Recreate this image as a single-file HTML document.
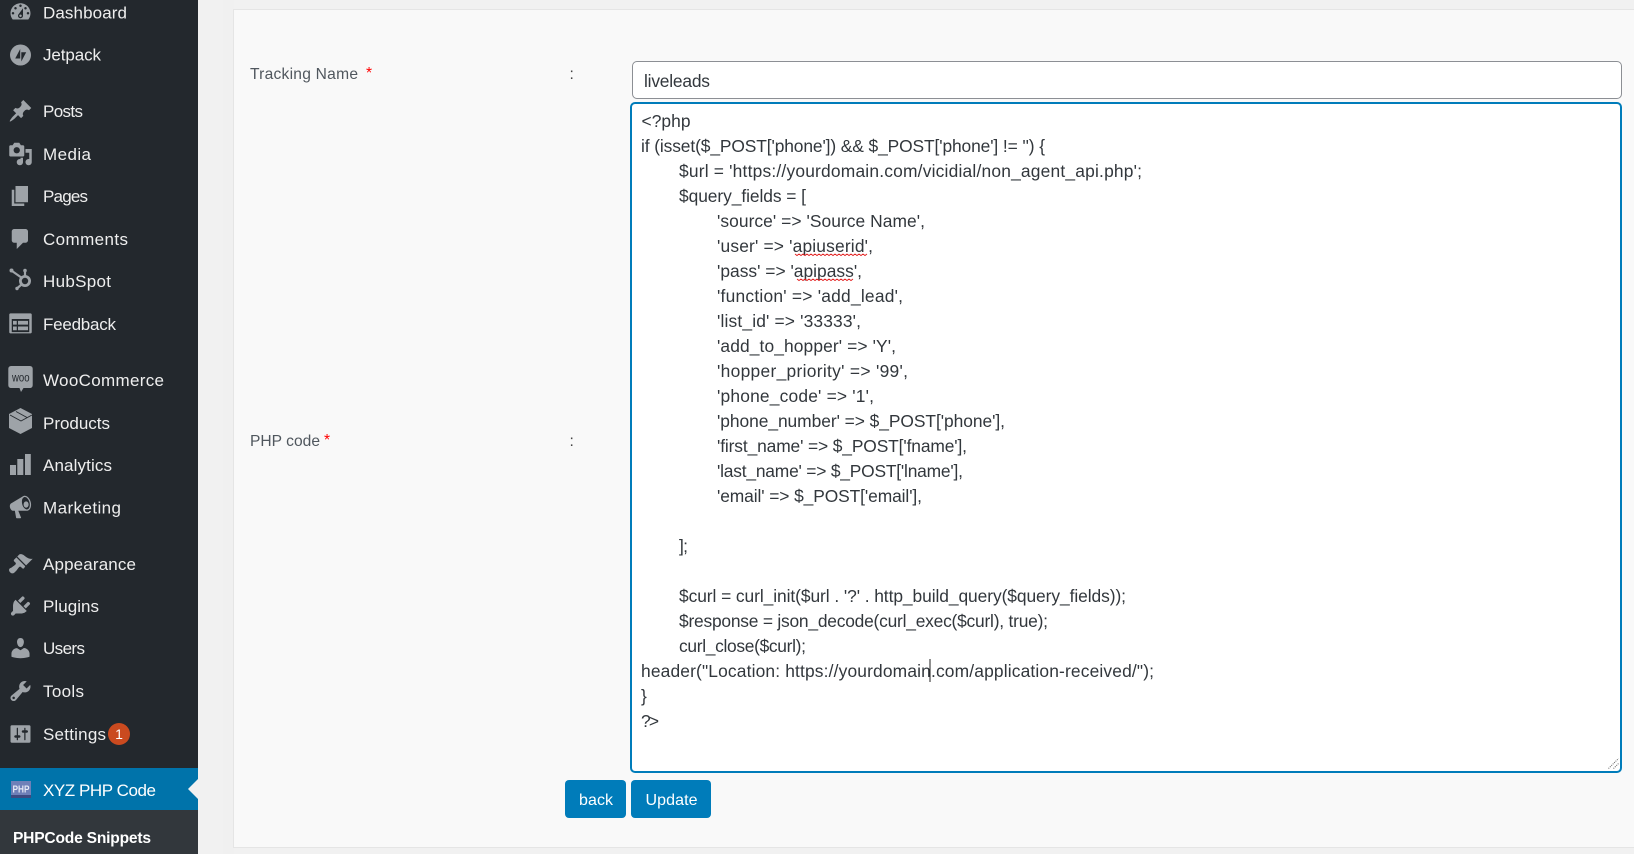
<!DOCTYPE html>
<html lang="en">
<head>
<meta charset="utf-8">
<title>XYZ PHP Code</title>
<style>
html,body{margin:0;padding:0;width:1634px;height:854px;overflow:hidden;background:#f1f1f1;font-family:"Liberation Sans",sans-serif}
.a{position:absolute;box-sizing:border-box}
#side{left:0;top:0;width:198px;height:854px;background:#23282d}
#act{left:0;top:768px;width:198px;height:42px;background:#0073aa}
#sub{left:0;top:810px;width:198px;height:44px;background:#32373c}
#strip{left:223px;top:0;width:11px;height:854px;background:#f0f0f0}
#panel{left:233px;top:9px;width:1420px;height:839px;background:#f9f9f9;border:1px solid #e5e5e5}
#inp{left:632px;top:61px;width:990px;height:38px;background:#fff;border:1px solid #8c8f94;border-radius:5px}
#ta{left:630px;top:102px;width:992px;height:671px;background:#fff;border:2px solid #007cba;border-radius:5px}
.btn{background:#007cba;border-radius:4px;top:780px;height:38px}
#b1{left:565px;width:61px}
#b2{left:631px;width:80px}
svg{position:absolute;left:0;top:0}
.m{font:17px "Liberation Sans",sans-serif;fill:#eee}
.c{font:17.4px "Liberation Sans",sans-serif;fill:#32373c}
.l{font:15.6px "Liberation Sans",sans-serif;fill:#50575e}
.i{fill:#9ea3a8}
</style>
</head>
<body>
<div class="a" id="side"></div>
<div class="a" id="act"></div>
<div class="a" id="sub"></div>
<div class="a" id="strip"></div>
<div class="a" id="panel"></div>
<div class="a" id="inp"></div>
<div class="a" id="ta"></div>
<div class="a btn" id="b1"></div>
<div class="a btn" id="b2"></div>

<svg width="1634" height="854" viewBox="0 0 1634 854">
<!-- active arrow -->
<path d="M198 779L188 789L198 799z" fill="#f1f1f1"/>

<!-- menu icons -->
<g class="i">
<path transform="translate(8,-.5) scale(1.25)" d="M3.76 16h12.48c1.1-1.37 1.76-3.11 1.76-5 0-4.42-3.58-8-8-8s-8 3.58-8 8c0 1.89.66 3.63 1.76 5zM10 4c.55 0 1 .45 1 1s-.45 1-1 1-1-.45-1-1 .45-1 1-1zM6 6c.55 0 1 .45 1 1s-.45 1-1 1-1-.45-1-1 .45-1 1-1zm8 0c.55 0 1 .45 1 1s-.45 1-1 1-1-.45-1-1 .45-1 1-1zm-5.37 5.55L12 7v6c0 1.1-.9 2-2 2s-2-.9-2-2c0-.57.24-1.08.63-1.45zM4 10c.55 0 1 .45 1 1s-.45 1-1 1-1-.45-1-1 .45-1 1-1zm12 0c.55 0 1 .45 1 1s-.45 1-1 1-1-.45-1-1 .45-1 1-1zm-5 3c0-.55-.45-1-1-1s-1 .45-1 1 .45 1 1 1 1-.45 1-1z"/>
<circle cx="20.5" cy="55" r="10.5"/>
<path transform="translate(8,98.5) scale(1.25)" d="M10.44 3.02l1.82-1.82 6.36 6.35-1.83 1.82c-1.05-.68-2.48-.57-3.41.36l-.75.75c-.92.93-1.04 2.35-.35 3.41l-1.83 1.82-2.41-2.41-2.8 2.79c-.42.42-3.38 2.71-3.8 2.29s1.86-3.39 2.28-3.81l2.79-2.79L4.1 9.36l1.83-1.82c1.05.69 2.48.57 3.4-.36l.75-.75c.93-.92 1.05-2.35.36-3.41z"/>
<path transform="translate(8,141.5) scale(1.25)" d="M13 11V4c0-.55-.45-1-1-1h-1.67L9 1H5L3.67 3H2c-.55 0-1 .45-1 1v7c0 .55.45 1 1 1h10c.55 0 1-.45 1-1zM7 4.5c1.38 0 2.5 1.12 2.5 2.5S8.38 9.5 7 9.5 4.5 8.38 4.5 7 5.62 4.5 7 4.5zM14 6h5v10.5c0 1.38-1.12 2.5-2.5 2.5S14 17.88 14 16.5s1.12-2.5 2.5-2.5c.17 0 .34.02.5.05V9h-3V6zm-4 8.05V13h2v3.5c0 1.38-1.12 2.5-2.5 2.5S7 17.88 7 16.5 8.12 14 9.5 14c.17 0 .34.02.5.05z"/>
<path transform="translate(8,183.5) scale(1.25)" d="M6 15V2h10v13H6zm-1 1h8v2H3V5h2v11z"/>
<path transform="translate(8,226.5) scale(1.25)" d="M5 2h9c1.1 0 2 .9 2 2v7c0 1.1-.9 2-2 2h-2l-5 5v-5H5c-1.1 0-2-.9-2-2V4c0-1.1.9-2 2-2z"/>
<path fill-rule="evenodd" transform="translate(8,311.5) scale(1.25)" d="M2 1.5h16c.55 0 1 .45 1 1v14c0 .55-.45 1-1 1H2c-.55 0-1-.45-1-1v-14c0-.55.45-1 1-1zM17 16.5V6H3v10.500zM4 7.500v3h3v-3zM8 7.500v3h8v-3zM4 12v3h3v-3zM8 12v3h8v-3z"/>
<path d="M11 366h19a2.700 2.700 0 0 1 2.700 2.700v16.600a2.700 2.700 0 0 1-2.700 2.700h-6.500l-2.500 4-1.500-4H11a2.700 2.700 0 0 1-2.700-2.700v-16.600a2.700 2.700 0 0 1 2.700-2.700z"/>
<path d="M20.500 408L32 414V428L20.500 434L9 428V414z"/>
<rect x="10" y="465" width="6" height="10"/>
<rect x="17.300" y="459" width="6" height="16"/>
<rect x="25" y="454" width="5.800" height="21"/>
<path fill-rule="evenodd" transform="translate(8,494.500) scale(1.25)" d="M18.150 5.940c.46 1.620.38 3.220-.02 4.480-.42 1.280-1.260 2.180-2.300 2.480-.16.06-.26.06-.4.06-.06.02-.12.02-.18.02-.06.02-.14.02-.22.02h-6.800l2.220 5.500c.02.14-.06.26-.14.34-.08.1-.24.16-.34.16H6.950c-.1 0-.26-.06-.34-.16-.08-.08-.16-.2-.14-.34l-1-5.500H4.250l-.02-.02c-.5.06-1.080-.18-1.540-.62s-.88-1.080-1.060-1.880c-.24-.8-.2-1.560-.02-2.200.18-.62.58-1.080 1.060-1.300l.02-.02 9-5.400c.1-.06.18-.1.24-.16.06-.04.14-.08.24-.12.16-.08.28-.12.5-.18 1.040-.3 2.240.1 3.220.98s1.840 2.240 2.260 3.860zm-2.580 5.980h-.02c.4-.1.74-.34 1.040-.7.58-.7.860-1.760.860-3.040-.02-.64-.1-1.300-.28-1.980-.34-1.360-1.020-2.500-1.780-3.240s-1.680-1.100-2.460-.88c-.38.12-.72.34-.98.7-.58.7-.84 1.760-.82 3.040 0 .64.08 1.300.26 1.980.34 1.340 1 2.480 1.780 3.220.78.76 1.680 1.100 2.400.9zM14.500 5.500c1.100 0 2 1.100 2 2.500s-.9 2.500-2 2.500-2-1.100-2-2.500.9-2.500 2-2.500z"/>
<path transform="translate(8,551.500) scale(1.25)" d="M14.480 11.060L7.410 3.990l1.500-1.500c.5-.56 2.300-.47 3.510.32 1.210.8 1.430 1.280 2.910 2.100 1.180.64 2.450 1.260 4.450.85zm-.71.71L6.700 4.700 4.930 6.470c-.39.39-.39 1.020 0 1.410l1.060 1.060c.39.39.39 1.030 0 1.420-.6.6-1.430 1.110-2.210 1.690-.35.26-.7.53-1.010.84C1.430 13.230.4 14.080 1.020 15.700c.15.39.4.73.69 1.020.25.26.55.46.88.59 1.650.65 2.500-.38 3.840-1.720.31-.31.57-.66.83-1.010.58-.78 1.090-1.610 1.690-2.210.39-.39 1.020-.39 1.420 0l1.060 1.060c.39.39 1.020.39 1.410 0z"/>
<path transform="translate(8,593.500) scale(1.25)" d="M13.110 4.360L9.870 7.600 8 5.730l3.240-3.240c.35-.34 1.050-.2 1.560.32.52.51.66 1.210.31 1.550zm-8 1.770l.91-1.120 9.010 9.010-1.190.84c-.71.71-2.630 1.160-3.820 1.160H6.140L4.900 17.260c-.59.59-1.540.59-2.120 0-.59-.58-.59-1.530 0-2.120l1.240-1.240v-3.880c0-1.130.4-3.190 1.090-3.890zm7.260 3.970l3.240-3.240c.34-.35 1.040-.21 1.550.31.52.51.66 1.210.31 1.550l-3.240 3.250z"/>
<path transform="translate(8,635.500) scale(1.25)" d="M10 9.250c-2.270 0-2.730-3.440-2.730-3.440C7 4.020 7.820 2 9.970 2c2.160 0 2.980 2.020 2.710 3.810 0 0-.41 3.440-2.680 3.440zm0 2.570L12.720 10c2.390 0 4.520 2.330 4.520 4.530v2.490s-3.650 1.130-7.240 1.130c-3.650 0-7.240-1.130-7.240-1.130v-2.490c0-2.250 1.940-4.480 4.470-4.480z"/>
<path fill-rule="evenodd" transform="translate(8,678.500) scale(1.25)" d="M16.680 9.770c-1.340 1.340-3.300 1.670-4.950.99l-5.410 6.520c-.99.99-2.590.99-3.580 0s-.99-2.590 0-3.570l6.520-5.420c-.68-1.650-.35-3.610.99-4.950 1.280-1.280 3.120-1.620 4.720-1.060l-2.890 2.890 2.820 2.820 2.860-2.870c.53 1.580.18 3.390-1.080 4.650zM3.810 16.210c.4.39 1.040.39 1.430 0 .4-.4.4-1.040 0-1.430-.39-.4-1.030-.4-1.430 0-.39.39-.39 1.030 0 1.430z"/>
<path fill-rule="evenodd" transform="translate(8,721.500) scale(1.25)" d="M18 16V4c0-.55-.45-1-1-1H3c-.55 0-1 .45-1 1v12c0 .55.45 1 1 1h14c.55 0 1-.45 1-1zM8 11h1c.55 0 1 .45 1 1s-.45 1-1 1H8v1.500c0 .28-.22.5-.5.5s-.5-.22-.5-.5V13H6c-.55 0-1-.45-1-1s.45-1 1-1h1V5.500c0-.28.22-.5.5-.5s.5.22.5.5V11zm5-2h-1c-.55 0-1-.45-1-1s.45-1 1-1h1V5.500c0-.28.22-.5.5-.5s.5.22.5.5V7h1c.55 0 1 .45 1 1s-.45 1-1 1h-1v5.500c0 .28-.22.5-.5.5s-.5-.22-.5-.5V9z"/>
</g>
<!-- jetpack triangles -->
<path d="M20.200 49V58.500H15.200zM21.300 61.500V52.200H26.200z" fill="#23282d"/>
<!-- hubspot -->
<g fill="none" stroke="#9ea3a8">
<circle cx="25" cy="281" r="4.600" stroke-width="2.800"/>
<path d="M12 271L22 278M25 271V276M21.500 284.500L17.500 288" stroke-width="2.200"/>
</g>
<g class="i"><circle cx="11.500" cy="270.500" r="2"/><circle cx="25" cy="270.500" r="1.800"/><circle cx="17" cy="288.500" r="1.700"/></g>
<!-- products lines -->
<path d="M10 415L21 421L32 415M16 411.500L27 417.500" fill="none" stroke="#23282d" stroke-width=".9"/>
<!-- woo label -->
<text x="12" y="381.500" font-family="Liberation Sans,sans-serif" font-size="12" fill="#23282d" textLength="17.500" lengthAdjust="spacingAndGlyphs">woo</text>
<!-- php icon -->
<rect x="11" y="781" width="20" height="17" fill="#6f80b8"/>
<rect x="11" y="795" width="20" height="3" fill="#3e4a80"/>
<text x="12.500" y="792.500" font-family="Liberation Sans,sans-serif" font-size="10" font-weight="bold" fill="#e6e9f5" textLength="17" lengthAdjust="spacingAndGlyphs">PHP</text>

<!-- menu labels -->
<text class="m" x="43" y="18.500" textLength="84">Dashboard</text>
<text class="m" x="43" y="60.500" textLength="58">Jetpack</text>
<text class="m" x="43" y="117" textLength="40">Posts</text>
<text class="m" x="43" y="160" textLength="48">Media</text>
<text class="m" x="43" y="202" textLength="45">Pages</text>
<text class="m" x="43" y="245" textLength="85">Comments</text>
<text class="m" x="43" y="287" textLength="68">HubSpot</text>
<text class="m" x="43" y="330" textLength="73">Feedback</text>
<text class="m" x="43" y="386" textLength="121">WooCommerce</text>
<text class="m" x="43" y="429" textLength="67">Products</text>
<text class="m" x="43" y="471" textLength="69">Analytics</text>
<text class="m" x="43" y="513.500" textLength="78">Marketing</text>
<text class="m" x="43" y="570" textLength="93">Appearance</text>
<text class="m" x="43" y="612" textLength="56">Plugins</text>
<text class="m" x="43" y="654" textLength="42">Users</text>
<text class="m" x="43" y="697" textLength="41">Tools</text>
<text class="m" x="43" y="740" textLength="63">Settings</text>
<circle cx="119" cy="734" r="11" fill="#ca4a1f"/>
<text x="119" y="739" text-anchor="middle" font-family="Liberation Sans,sans-serif" font-size="14" fill="#fff">1</text>
<text class="m" x="43" y="796" textLength="113" style="fill:#fff">XYZ PHP Code</text>
<text class="m" x="13" y="843" textLength="138" style="fill:#fff;font-size:15.6px;font-weight:bold">PHPCode Snippets</text>

<!-- form labels -->
<text class="l" x="250" y="79" textLength="108">Tracking Name</text>
<text x="366" y="78" font-family="Liberation Sans,sans-serif" font-size="15.600" fill="#f00">*</text>
<text class="l" x="569.500" y="79" style="fill:#444">:</text>
<text class="l" x="250" y="446" textLength="70">PHP code</text>
<text x="324" y="445" font-family="Liberation Sans,sans-serif" font-size="15.600" fill="#f00">*</text>
<text class="l" x="569.500" y="446" style="fill:#444">:</text>
<text class="c" x="644" y="87" textLength="66">liveleads</text>

<!-- code -->
<text class="c" x="641.500" y="127" textLength="49">&lt;?php</text>
<text class="c" x="641" y="152" textLength="404">if (isset($_POST['phone']) &amp;&amp; $_POST['phone'] != '') {</text>
<text class="c" x="679" y="177" textLength="463">$url = 'https://yourdomain.com/vicidial/non_agent_api.php';</text>
<text class="c" x="679" y="202" textLength="127">$query_fields = [</text>
<text class="c" x="717" y="227" textLength="208">'source' =&gt; 'Source Name',</text>
<text class="c" x="717" y="252" textLength="156">'user' =&gt; 'apiuserid',</text>
<text class="c" x="717" y="277" textLength="145">'pass' =&gt; 'apipass',</text>
<text class="c" x="717" y="302" textLength="186">'function' =&gt; 'add_lead',</text>
<text class="c" x="717" y="327" textLength="144">'list_id' =&gt; '33333',</text>
<text class="c" x="717" y="352" textLength="179">'add_to_hopper' =&gt; 'Y',</text>
<text class="c" x="717" y="377" textLength="191">'hopper_priority' =&gt; '99',</text>
<text class="c" x="717" y="402" textLength="157">'phone_code' =&gt; '1',</text>
<text class="c" x="717" y="427" textLength="288">'phone_number' =&gt; $_POST['phone'],</text>
<text class="c" x="717" y="452" textLength="250">'first_name' =&gt; $_POST['fname'],</text>
<text class="c" x="717" y="477" textLength="246">'last_name' =&gt; $_POST['lname'],</text>
<text class="c" x="717" y="502" textLength="205">'email' =&gt; $_POST['email'],</text>
<text class="c" x="679" y="552" textLength="9">];</text>
<text class="c" x="679" y="602" textLength="447">$curl = curl_init($url . '?' . http_build_query($query_fields));</text>
<text class="c" x="679" y="627" textLength="369">$response = json_decode(curl_exec($curl), true);</text>
<text class="c" x="679" y="652" textLength="127">curl_close($curl);</text>
<text class="c" x="641" y="677" textLength="513">header("Location: https://yourdomain.com/application-received/");</text>
<text class="c" x="641" y="702">}</text>
<text class="c" x="641" y="727" textLength="18">?&gt;</text>

<!-- spell squiggles -->
<path d="M795 254l2 1.500 2-1.500 2 1.500 2-1.500 2 1.500 2-1.500 2 1.500 2-1.500 2 1.500 2-1.500 2 1.500 2-1.500 2 1.500 2-1.500 2 1.500 2-1.500 2 1.500 2-1.500 2 1.500 2-1.500 2 1.500 2-1.500 2 1.500 2-1.500 2 1.500 2-1.500 2 1.500 2-1.500 2 1.500 2-1.500 2 1.500 2-1.500 2 1.500 2-1.500 2 1.500 2-1.500" fill="none" stroke="#e21b1b" stroke-width=".9"/>
<path d="M797 279l2 1.500 2-1.500 2 1.500 2-1.500 2 1.500 2-1.500 2 1.500 2-1.500 2 1.500 2-1.500 2 1.500 2-1.500 2 1.500 2-1.500 2 1.500 2-1.500 2 1.500 2-1.500 2 1.500 2-1.500 2 1.500 2-1.500 2 1.500 2-1.500 2 1.500 2-1.500 2 1.500 2-1.500" fill="none" stroke="#e21b1b" stroke-width=".9"/>
<!-- caret -->
<rect x="929.500" y="659" width="1" height="23" fill="#222"/>
<!-- resize grip -->
<path d="M1608.500 768.500L1618.500 758.500M1613.500 768.500L1618.500 763.500" stroke="#666" stroke-width="1" stroke-dasharray="1 1" fill="none"/>

<!-- buttons -->
<text x="579" y="805" font-family="Liberation Sans,sans-serif" font-size="16" fill="#fff" textLength="34">back</text>
<text x="645.500" y="805" font-family="Liberation Sans,sans-serif" font-size="16" fill="#fff" textLength="52">Update</text>
</svg>
</body>
</html>
